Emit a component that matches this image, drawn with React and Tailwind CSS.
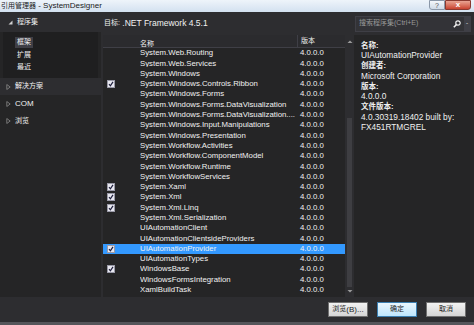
import React from 'react';

const rows = [
  ['System.Web.Routing', false],
  ['System.Web.Services', false],
  ['System.Windows', false],
  ['System.Windows.Controls.Ribbon', true],
  ['System.Windows.Forms', false],
  ['System.Windows.Forms.DataVisualization', false],
  ['System.Windows.Forms.DataVisualization....', false],
  ['System.Windows.Input.Manipulations', false],
  ['System.Windows.Presentation', false],
  ['System.Workflow.Activities', false],
  ['System.Workflow.ComponentModel', false],
  ['System.Workflow.Runtime', false],
  ['System.WorkflowServices', false],
  ['System.Xaml', true],
  ['System.Xml', true],
  ['System.Xml.Linq', true],
  ['System.Xml.Serialization', false],
  ['UIAutomationClient', false],
  ['UIAutomationClientsideProviders', false],
  ['UIAutomationProvider', true, true],
  ['UIAutomationTypes', false],
  ['WindowsBase', true],
  ['WindowsFormsIntegration', false],
  ['XamlBuildTask', false],
];

const details = [
  ['名称:', true],
  ['UIAutomationProvider'],
  ['创建者:', true],
  ['Microsoft Corporation'],
  ['版本:', true],
  ['4.0.0.0'],
  ['文件版本:', true],
  ['4.0.30319.18402 built by:'],
  ['FX451RTMGREL'],
];

// CJK glyphs render a little smaller than the latin text in the original
function Zh({ children }) {
  return <span className="text-[7px]">{children}</span>;
}

function Check() {
  return (
    <div className="w-[8px] h-[8px] bg-[#e8e8f0] border border-[#9a9aa8] flex items-center justify-center">
      <svg width="6" height="6" viewBox="0 0 6 6">
        <path d="M1 3.2 L2.4 4.8 L5 0.8" stroke="#1e1e3c" strokeWidth="1.2" fill="none" />
      </svg>
    </div>
  );
}

function Arrow({ open }) {
  if (open) {
    return (
      <svg width="5" height="5" viewBox="0 0 5 5">
        <path d="M4.5 0.5 L4.5 4.5 L0.5 4.5 Z" fill="#d0d0d0" />
      </svg>
    );
  }
  return (
    <svg width="5" height="6" viewBox="0 0 5 6">
      <path d="M0.8 0.5 L4.2 3 L0.8 5.5 Z" fill="none" stroke="#8a8a8a" strokeWidth="0.8" />
    </svg>
  );
}

function Btn({ children, primary }) {
  return (
    <div
      className={`w-[40px] h-[15px] flex items-center justify-center text-[8px] text-[#1e1e1e] border ${
        primary
          ? 'border-[#3c7fb1] bg-gradient-to-b from-[#eaf6fd] to-[#bee6fd]'
          : 'border-[#707070] bg-gradient-to-b from-[#f2f2f2] to-[#d5d5d5]'
      }`}
    >
      {children}
    </div>
  );
}

export default function App() {
  return (
    <div
      className="w-[474px] h-[325px] flex flex-col overflow-hidden bg-[#2d2d30] text-[#f1f1f1]"
      style={{ fontFamily: '"Liberation Sans", "Noto Sans CJK SC", sans-serif' }}
    >
      {/* title bar */}
      <div className="h-[12px] flex items-start bg-gradient-to-b from-[#eef4fa] to-[#d3e1f0]">
        <span className="pl-[1px] text-[8px] leading-[11px] text-[#1a1a1a]"><Zh>引用管理器</Zh> - SystemDesigner</span>
        <div className="flex-1" />
        <div className="w-[16px] h-[10px] border border-[#8a97a8] rounded-bl-[3px] bg-gradient-to-b from-[#f4f7fb] to-[#cfdae6] flex items-center justify-center text-[7px] text-[#555] leading-none">?</div>
        <div className="w-[26px] h-[10px] mr-[3px] border border-[#8a3a30] rounded-br-[3px] bg-gradient-to-b from-[#e8a493] to-[#c8412f] flex items-center justify-center text-[8px] text-white leading-none font-bold">x</div>
      </div>

      {/* main */}
      <div className="flex-1 flex min-h-0">
        {/* left */}
        <div className="w-[101px] bg-[#252526] flex flex-col">
          <div className="h-[20px] bg-[#2d2d30] flex items-center gap-[4px] pl-[8px]">
            <Arrow open />
            <Zh>程序集</Zh>
          </div>
          <div className="flex flex-col pl-[14px] pt-[4px] h-[46px] mx-[3px] bg-[#1f1f20]">
            <div className="h-[12.5px] flex items-center"><span className="bg-[#3f3f46] px-[2px] -ml-[2px] text-[7px]">框架</span></div>
            <div className="h-[12.5px] flex items-center"><Zh>扩展</Zh></div>
            <div className="h-[12.5px] flex items-center"><Zh>最近</Zh></div>
          </div>
          <div className="h-[17px] bg-[#2d2d30] flex items-center gap-[4px] pl-[6px]">
            <Arrow />
            <Zh>解决方案</Zh>
          </div>
          <div className="h-[17px] flex items-center gap-[4px] pl-[6px] text-[8px]">
            <Arrow />
            <span>COM</span>
          </div>
          <div className="h-[18px] flex items-center gap-[4px] pl-[6px]">
            <Arrow />
            <Zh>浏览</Zh>
          </div>
        </div>

        {/* center */}
        <div className="w-[251px] ml-[2px] flex flex-col">
          <div className="h-[23px] flex items-center pl-[1px] text-[8.5px]"><Zh>目标:</Zh>&nbsp;.NET Framework 4.5.1</div>
          <div className="flex-1 flex min-h-0 bg-[#252526]">
            <div className="flex-1 flex flex-col">
              <div className="h-[13px] flex items-center border-b border-[#3f3f46] bg-[#2b2b2e]">
                <span className="w-[194px] pl-[37px]"><Zh>名称</Zh></span>
                <span className="h-full border-l border-[#3f3f46] pl-[3px] flex items-center"><Zh>版本</Zh></span>
              </div>
              {rows.map(([name, checked, sel]) => (
                <div
                  key={name}
                  className={`h-[10.3px] flex items-center text-[7.8px] leading-none ${sel ? 'bg-[#3399ff]' : ''}`}
                >
                  <div className="w-[37px] pl-[4px]">{checked && <Check />}</div>
                  <span className="w-[160px] whitespace-nowrap overflow-hidden">{name}</span>
                  <span>4.0.0.0</span>
                </div>
              ))}
            </div>
            {/* scrollbar */}
            <div className="w-[9px] bg-[#2d2d30] flex flex-col items-center">
              <svg width="6" height="8" viewBox="0 0 6 8" className="mt-[3px]">
                <path d="M0.5 5 L3 2.5 L5.5 5 Z" fill="#9a9a9a" />
              </svg>
              <div className="w-[5px] mt-[72px] flex-1 bg-[#3e3e42]" />
              <svg width="6" height="8" viewBox="0 0 6 8" className="mb-[2px]">
                <path d="M0.5 3 L3 5.5 L5.5 3 Z" fill="#9a9a9a" />
              </svg>
            </div>
          </div>
        </div>

        {/* right */}
        <div className="flex-1 flex flex-col">
          <div className="h-[23px] flex items-center pl-[1px] pr-[3px]">
            <div className="flex-1 h-[16px] bg-[#333337] border border-[#3f3f46] flex items-center pl-[3px] text-[7px] text-[#999]">
              <span className="flex-1">搜索程序集(Ctrl+E)</span>
              <svg width="8" height="8" viewBox="0 0 8 8" className="mr-[3px]">
                <circle cx="5" cy="3" r="2.2" fill="none" stroke="#f1f1f1" strokeWidth="1.2" />
                <path d="M3.4 4.6 L0.8 7.2" stroke="#f1f1f1" strokeWidth="1.5" />
              </svg>
              <div className="w-[6px] h-full bg-[#3f3f46] flex items-center justify-center text-[6px] text-white">-</div>
            </div>
          </div>
          <div className="flex-1 bg-[#252526] pl-[7px] pt-[5px] flex flex-col text-[8.3px]">
            {details.map(([t, b]) => (
              <div key={t} className={`h-[10.3px] flex items-center whitespace-nowrap ${b ? 'font-bold text-[7.5px]' : ''}`}>{t}</div>
            ))}
          </div>
        </div>
      </div>

      {/* bottom buttons */}
      <div className="h-[25px] flex items-center justify-end gap-[9px] pr-[8px]">
        <Btn><Zh>浏览</Zh>(B)...</Btn>
        <Btn primary><Zh>确定</Zh></Btn>
        <Btn><Zh>取消</Zh></Btn>
      </div>
      <div className="h-[3px] bg-[#55555a]" />
    </div>
  );
}
